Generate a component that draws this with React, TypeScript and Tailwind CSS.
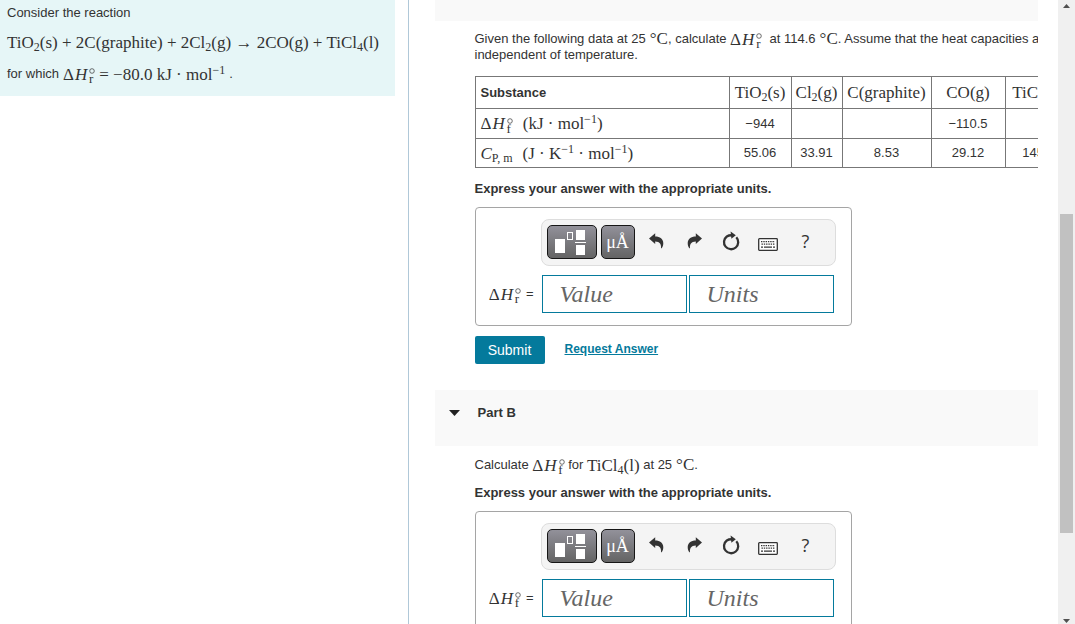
import type { ReactNode } from "react";

function M({ children, className = "text-[17px]" }: { children: ReactNode; className?: string }) {
  return (
    <span className={`whitespace-nowrap font-['Liberation_Serif',serif] leading-none ${className}`}>{children}</span>
  );
}

function Sub({ children }: { children: ReactNode }) {
  return <sub className="-bottom-[3px] text-[12px]">{children}</sub>;
}

function Sup({ children }: { children: ReactNode }) {
  return <sup className="-top-[6px] text-[12px]">{children}</sup>;
}

function Enthalpy({ kind }: { kind: "r" | "f" }) {
  return (
    <span className="inline-flex items-center font-['Liberation_Serif',serif] text-[17px] leading-none">
      <span className="mr-px">Δ</span>
      <i>H</i>
      <span className="flex w-[8px] flex-col items-center pt-[3px] text-[13px] leading-[9px]">
        <svg viewBox="0 0 6 6" className="ml-[2px] size-[6px]" aria-hidden="true">
          <circle cx="3" cy="3" r="2.3" fill="none" stroke="currentColor" strokeWidth="0.7" />
        </svg>
        <span>{kind}</span>
      </span>
    </span>
  );
}

function Celsius() {
  return (
    <M className="pb-[2px] text-[17px]">
      <span className="ml-1">°</span>C
    </M>
  );
}

function UndoIcon({ flip = false }: { flip?: boolean }) {
  return (
    <svg viewBox="0 0 15 16" className={flip ? "mb-[2px] h-4 w-[15px] -scale-x-100" : "mb-[2px] h-4 w-[15px]"} aria-hidden="true">
      <path d="M0 5.6 6.200.2v3.200C11 3.400 14.300 6 14.300 10.200c0 2-.6 3.700-1.700 5h-.6c.4-3.600-1-6.600-5.800-6.700v2.600z" fill="#333" />
    </svg>
  );
}

function ResetIcon() {
  return (
    <svg viewBox="0 0 18 20" className="mb-[2px] h-5 w-[18px]" aria-hidden="true">
      <path d="M14.3 6.300A7.100 7.100 0 1 1 4.800 5.500Q7 4.100 10 4.300" fill="none" stroke="#333" strokeWidth="2.3" />
      <path d="m8.600.5 5.200 3.700-4.400 3.600z" fill="#333" />
    </svg>
  );
}

function KeyboardIcon() {
  return (
    <svg viewBox="0 0 20 13" className="h-[13px] w-5" aria-hidden="true">
      <rect x="0.7" y="0.7" width="18.600" height="11.600" rx="0.7" fill="#fff" stroke="#333" strokeWidth="1.3" />
      <path d="M3 3.7h14M3.5 6.2h13.5" stroke="#333" strokeWidth="1.3" strokeDasharray="1.4 .9" />
      <path d="M3 9.2h2M6 9.2h8M15 9.2h2" stroke="#333" strokeWidth="1.3" />
    </svg>
  );
}

function TemplateIcon() {
  return (
    <svg viewBox="0 0 32 28" className="mr-[4px] mb-[3px] h-7 w-8" aria-hidden="true">
      <path d="M1 12h10v14H1zM22 3h9v10h-9zM22 18h9v10h-9zM21 15h11v1H21z" fill="#fff" />
      <rect x="13.5" y="5.5" width="5" height="7" fill="none" stroke="#fff" />
    </svg>
  );
}

const darkButton =
  "flex h-[34px] items-center justify-center rounded-[5px] border border-[#161616] bg-linear-to-b from-[#92919a] to-[#646464] text-white";
const iconButton = "flex h-[34px] items-center justify-center";
const field =
  "h-[38px] w-[145px] border border-[#047a9c] bg-white pl-[17px] font-['Liberation_Serif',serif] text-[24px] italic placeholder:text-[#666] outline-none";

function AnswerBox({ kind }: { kind: "r" | "f" }) {
  return (
    <div className="w-[377px] rounded-[4px] border border-[#a5a5a5] bg-white pt-[11px] pb-3">
      <div className="ml-[65px] flex h-[47px] w-[295px] items-center rounded-[8px] border border-[#ddd] bg-[#f4f4f4] pb-px pl-[5px]">
        <button type="button" aria-label="Templates" className={`${darkButton} w-[50px]`}>
          <TemplateIcon />
        </button>
        <button
          type="button"
          aria-label="Symbols"
          className={`${darkButton} ml-1 w-[34px] font-['Liberation_Serif',serif] text-[18px] leading-none`}
        >
          μÅ
        </button>
        <button type="button" aria-label="Undo" className={`${iconButton} ml-[11px] w-[22px]`}>
          <UndoIcon />
        </button>
        <button type="button" aria-label="Redo" className={`${iconButton} ml-4 w-[22px]`}>
          <UndoIcon flip />
        </button>
        <button type="button" aria-label="Reset" className={`${iconButton} ml-[14px] w-[22px]`}>
          <ResetIcon />
        </button>
        <button type="button" aria-label="Keyboard shortcuts" className={`${iconButton} ml-[15px] w-[22px] pt-1`}>
          <KeyboardIcon />
        </button>
        <button
          type="button"
          aria-label="Help"
          className={`${iconButton} ml-4 w-[22px] pb-[2px] font-['Open_Sans',sans-serif] text-[18px] text-[#333]`}
        >
          ?
        </button>
      </div>
      <div className="mt-[9px] flex items-center">
        <label htmlFor={`value-${kind}`} className="flex w-[66px] items-center justify-end gap-[5px] pr-2">
          <Enthalpy kind={kind} />
          <span>=</span>
        </label>
        <input id={`value-${kind}`} placeholder="Value" className={field} />
        <input aria-label="Units" placeholder="Units" className={`${field} ml-[2px]`} />
      </div>
    </div>
  );
}

const cell = "border border-[#777] p-0 text-center";

function DataTable() {
  return (
    <table className="w-[597px] table-fixed border-collapse">
      <colgroup>
        <col className="w-[254px]" />
        <col className="w-[62px]" />
        <col className="w-[51px]" />
        <col className="w-[89px]" />
        <col className="w-[74px]" />
        <col className="w-[67px]" />
      </colgroup>
      <thead>
        <tr className="h-8">
          <th className="border border-[#777] pl-[5px] text-left font-bold">Substance</th>
          <th className={`${cell} font-normal`}><M>TiO<Sub>2</Sub>(s)</M></th>
          <th className={`${cell} font-normal`}><M>Cl<Sub>2</Sub>(g)</M></th>
          <th className={`${cell} font-normal`}><M>C(graphite)</M></th>
          <th className={`${cell} font-normal`}><M>CO(g)</M></th>
          <th className={`${cell} font-normal`}><M>TiCl<Sub>4</Sub>(l)</M></th>
        </tr>
      </thead>
      <tbody>
        <tr className="h-[30px]">
          <th className="border border-[#777] pl-[5px] text-left font-normal">
            <span className="flex items-center gap-[10px]">
              <Enthalpy kind="f" />
              <M>(kJ · mol<Sup>−1</Sup>)</M>
            </span>
          </th>
          <td className={cell}>−944</td>
          <td className={cell} />
          <td className={cell} />
          <td className={cell}>−110.5</td>
          <td className={cell} />
        </tr>
        <tr className="h-[29px]">
          <th className="border border-[#777] pl-[5px] text-left font-normal">
            <span className="flex items-center gap-[10px]">
              <M><i>C</i><Sub>P, m</Sub></M>
              <M>(J · K<Sup>−1</Sup> · mol<Sup>−1</Sup>)</M>
            </span>
          </th>
          <td className={cell}>55.06</td>
          <td className={cell}>33.91</td>
          <td className={cell}>8.53</td>
          <td className={cell}>29.12</td>
          <td className={cell}>145.2</td>
        </tr>
      </tbody>
    </table>
  );
}

export default function App() {
  return (
    <div className="flex h-screen overflow-hidden bg-white font-['Liberation_Sans',Arial,sans-serif] text-[13px] leading-4 text-[#333]">
      <aside className="w-[38%] shrink-0 border-r border-[#b0c8d8] pr-[13px]">
        <div className="flex h-24 flex-col bg-[#e6f6f7] px-[7px] pt-[5px]">
          <p>Consider the reaction</p>
          <p className="mt-[9px] flex h-6 items-center">
            <M>
              TiO<Sub>2</Sub>(s) + 2C(graphite) + 2Cl<Sub>2</Sub>(g) → 2CO(g) + TiCl<Sub>4</Sub>(l)
            </M>
          </p>
          <p className="mt-2 flex h-6 items-center gap-1 whitespace-nowrap">
            <span>for which</span>
            <Enthalpy kind="r" />
            <M>= −80.0 kJ · mol<Sup>−1</Sup></M>
            <span>.</span>
          </p>
        </div>
      </aside>

      <main className="ml-[26px] min-w-0 flex-1 overflow-hidden">
        <div className="h-[21px] bg-[#f9f9f9]" />
        <section className="pt-[10px] pl-10">
          <p className="flex h-4 items-center whitespace-pre">
            <span>Given the following data at 25</span>
            <Celsius />
            <span>, calculate </span>
            <Enthalpy kind="r" />
            <span>  at 114.6</span>
            <Celsius />
            <span>. Assume that the heat capacities are</span>
          </p>
          <p>independent of temperature.</p>
          <div className="mt-[13px]">
            <DataTable />
          </div>
          <p className="mt-[13px] mb-[10px] font-bold">Express your answer with the appropriate units.</p>
          <AnswerBox kind="r" />
          <div className="mt-[10px] flex h-7 items-center">
            <button type="button" className="h-7 w-[70px] rounded-[2px] bg-[#047a9c] text-[14px] text-white">
              Submit
            </button>
            <a href="#answer" className="ml-5 pb-[2px] text-[12px] font-bold text-[#047a9c] underline">
              Request Answer
            </a>
          </div>
        </section>

        <h2 className="mt-[26px] h-14 bg-[#f9f9f9] pt-[15px] font-bold">
          <button type="button" className="flex items-center pl-[14px]">
            <svg viewBox="0 0 11 6" className="mr-[18px] h-[6px] w-[11px]" aria-hidden="true">
              <path d="M0 0h11L5.500 6z" fill="#222" />
            </svg>
            Part B
          </button>
        </h2>
        <section className="pt-[11px] pl-10">
          <p className="flex h-4 items-center whitespace-pre">
            <span>Calculate </span>
            <Enthalpy kind="f" />
            <span> for </span>
            <M>TiCl<Sub>4</Sub>(l)</M>
            <span> at 25</span>
            <Celsius />
            <span>.</span>
          </p>
          <p className="mt-[12px] mb-[10px] font-bold">Express your answer with the appropriate units.</p>
          <AnswerBox kind="f" />
        </section>
      </main>

      <div className="ml-5 flex w-[17px] shrink-0 flex-col items-center bg-[#f0f0f0]" aria-hidden="true">
        <svg viewBox="0 0 7 4" className="mt-1 h-1 w-[7px]">
          <path d="M0 4h7L3.500 0z" fill="#505050" />
        </svg>
        <div className="flex w-full flex-1 flex-col items-center py-2">
          <div className="grow-[198]" />
          <div className="w-[13px] grow-[320] bg-[#c1c1c1]" />
          <div className="grow-[78]" />
        </div>
        <svg viewBox="0 0 7 4" className="mb-px h-1 w-[7px]">
          <path d="M0 0h7L3.500 4z" fill="#505050" />
        </svg>
      </div>
    </div>
  );
}
